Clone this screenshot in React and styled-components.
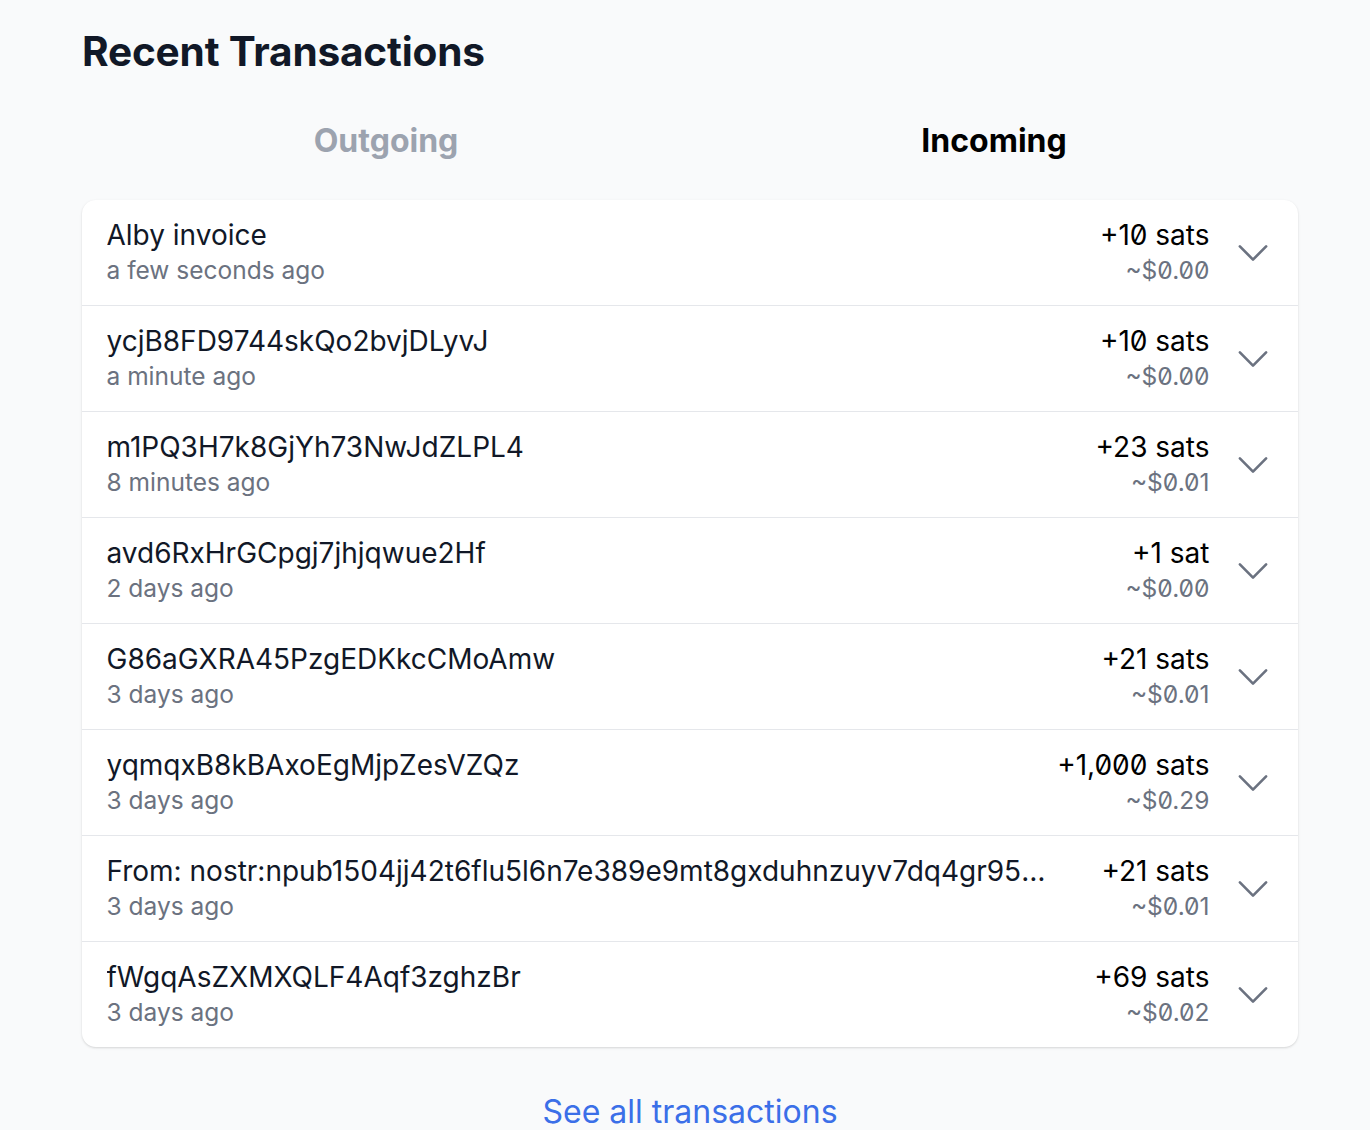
import React, { useState } from "react";
import styled, { createGlobalStyle } from "styled-components";

const GlobalStyle = createGlobalStyle`
  html, body {
    margin: 0;
    padding: 0;
    background: #f9fafb;
    font-family: Inter, "Noto Sans", "Liberation Sans", sans-serif;
    -webkit-font-smoothing: antialiased;
  }
`;

const transactions = [
  { title: "Alby invoice", time: "a few seconds ago", amount: "+10 sats", fiat: "~$0.00" },
  { title: "ycjB8FD9744skQo2bvjDLyvJ", time: "a minute ago", amount: "+10 sats", fiat: "~$0.00" },
  { title: "m1PQ3H7k8GjYh73NwJdZLPL4", time: "8 minutes ago", amount: "+23 sats", fiat: "~$0.01" },
  { title: "avd6RxHrGCpgj7jhjqwue2Hf", time: "2 days ago", amount: "+1 sat", fiat: "~$0.00" },
  { title: "G86aGXRA45PzgEDKkcCMoAmw", time: "3 days ago", amount: "+21 sats", fiat: "~$0.01" },
  { title: "yqmqxB8kBAxoEgMjpZesVZQz", time: "3 days ago", amount: "+1,000 sats", fiat: "~$0.29" },
  {
    title: "From: nostr:npub1504jj42t6flu5l6n7e389e9mt8gxduhnzuyv7dq4gr95kqwzj6p5sxlyrp",
    time: "3 days ago",
    amount: "+21 sats",
    fiat: "~$0.01",
  },
  { title: "fWgqAsZXMXQLF4Aqf3zghzBr", time: "3 days ago", amount: "+69 sats", fiat: "~$0.02" },
];

function ChevronDown() {
  return (
    <svg width="42" height="42" viewBox="0 0 24 24" fill="none" stroke="currentColor" strokeWidth="1.5">
      <path strokeLinecap="round" strokeLinejoin="round" d="M19.5 8.25l-7.5 7.5-7.5-7.5" />
    </svg>
  );
}

export default function App() {
  const [tab, setTab] = useState("incoming");

  return (
    <Page>
      <GlobalStyle />
      <Heading>Recent Transactions</Heading>

      <Tabs>
        <Tab $active={tab === "outgoing"} onClick={() => setTab("outgoing")}>Outgoing</Tab>
        <Tab $active={tab === "incoming"} onClick={() => setTab("incoming")}>Incoming</Tab>
      </Tabs>

      <Card>
        {transactions.map((t, i) => (
          <Row key={i}>
            <Info>
              <Title>{t.title}</Title>
              <Time>{t.time}</Time>
            </Info>
            <Amounts>
              <Amount>{t.amount}</Amount>
              <Fiat>{t.fiat}</Fiat>
            </Amounts>
            <Toggle>
              <ChevronDown />
            </Toggle>
          </Row>
        ))}
      </Card>

      <Footer>
        <SeeAll href="#">See all transactions</SeeAll>
      </Footer>
    </Page>
  );
}

const Page = styled.div`
  width: 1216px;
  padding: 26px 0 0 82px;
`;

const Heading = styled.h2`
  margin: 0;
  font-size: 40.6px;
  line-height: 52px;
  font-weight: 700;
  color: #111827;
  letter-spacing: -0.2px;
`;

const Tabs = styled.div`
  display: grid;
  grid-template-columns: 1fr 1fr;
  margin-top: 40px;
  margin-bottom: 37px;
`;

const Tab = styled.button`
  border: 0;
  background: none;
  padding: 0;
  font-family: inherit;
  font-size: 32px;
  line-height: 45px;
  font-weight: 700;
  cursor: pointer;
  color: ${({ $active }) => ($active ? "#000000" : "#9ca3af")};
`;

const Card = styled.div`
  background: #ffffff;
  border-radius: 14px;
  box-shadow: 0 1px 3px rgba(0, 0, 0, 0.1), 0 1px 2px rgba(0, 0, 0, 0.06);
  overflow: hidden;
`;

const Row = styled.div`
  display: flex;
  align-items: center;
  padding: 18px 24.5px 17px;
  border-top: 1.75px solid #e5e7eb;

  &:first-child {
    border-top: 0;
  }
`;

const Info = styled.div`
  flex: 1;
  min-width: 0;
  overflow: hidden;
`;

const Title = styled.div`
  font-size: 28px;
  line-height: 35px;
  color: #111827;
  white-space: nowrap;
  overflow: hidden;
  text-overflow: ellipsis;
`;

const Time = styled.div`
  font-size: 24.5px;
  line-height: 35px;
  color: #6b7280;
  white-space: nowrap;
`;

const Amounts = styled.div`
  flex-shrink: 0;
  margin-left: 44px;
  text-align: right;
  font-variant-numeric: slashed-zero;
  font-feature-settings: "zero" 1;
`;

const Amount = styled.div`
  font-size: 28px;
  line-height: 35px;
  color: #000000;
  white-space: nowrap;
`;

const Fiat = styled.div`
  font-size: 24.5px;
  line-height: 35px;
  color: #6b7280;
  white-space: nowrap;
`;

const Toggle = styled.div`
  display: flex;
  margin-left: 22px;
  color: #6b7280;
`;

const Footer = styled.div`
  display: flex;
  justify-content: center;
  margin-top: 42px;
`;

const SeeAll = styled.a`
  font-size: 32px;
  line-height: 45px;
  color: #3b6fe8;
  text-decoration: none;
`;
